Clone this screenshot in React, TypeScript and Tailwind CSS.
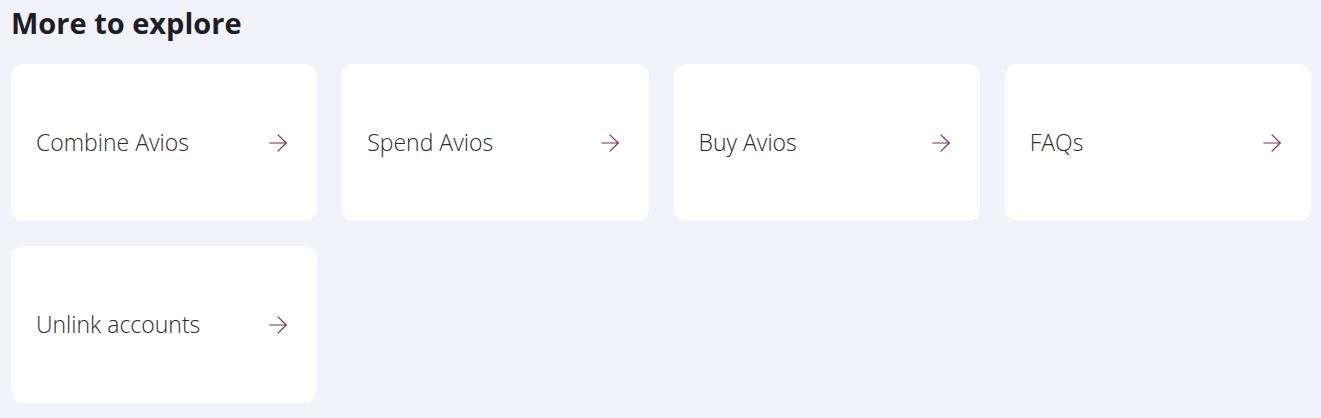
import { ArrowRight } from "lucide-react";

const links = ["Combine Avios", "Spend Avios", "Buy Avios", "FAQs", "Unlink accounts"];

export default function App() {
  return (
    <div className="min-h-[418px] bg-[#f2f2fa] px-[11px] pt-[3px] font-['Open_Sans',sans-serif]">
      <h2 className="text-[29px] font-bold leading-[40px] text-[#1d1d26]">More to explore</h2>

      <div className="mt-[21px] grid grid-cols-4 gap-x-[25px] gap-y-[25px] w-[1300px]">
        {links.map((label) => (
          <a
            key={label}
            href="#"
            className="flex h-[157px] items-center justify-between rounded-[12px] bg-white pl-[25px] pr-[25px]"
          >
            <span className="text-[23px] font-light text-[#2b2b33]">{label}</span>
            <ArrowRight className="h-7 w-7 text-[#7a2d5c]" strokeWidth={1} />
          </a>
        ))}
      </div>
    </div>
  );
}
